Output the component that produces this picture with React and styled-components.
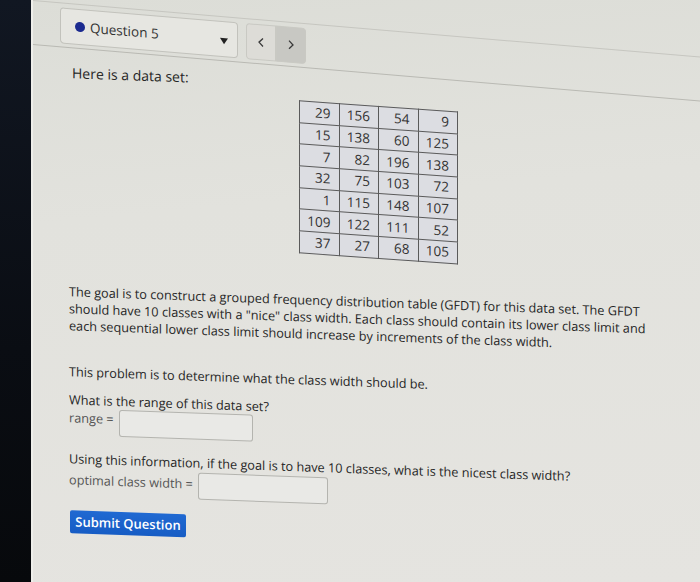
import styled, { createGlobalStyle } from 'styled-components';

const GlobalStyle = createGlobalStyle`
  html, body {
    margin: 0;
    padding: 0;
  }
  body {
    width: 700px;
    height: 582px;
    overflow: hidden;
    background: #0b0f16;
    font-family: 'Open Sans', 'Noto Sans', sans-serif;
  }
`;

const Frame = styled.div`
  display: flex;
  width: 700px;
  height: 582px;
  overflow: hidden;
`;

const Bezel = styled.div`
  width: 31px;
  flex-shrink: 0;
  background: linear-gradient(180deg, #111722 0%, #0a0d13 60%, #07090c 100%);
`;

const Screen = styled.div`
  flex: 1;
  overflow: hidden;
  border-left: 2px solid #eeeeea;
  background: linear-gradient(175deg, #dcddd7 0%, #e2e2dd 35%, #e5e4e0 100%);
  color: #262626;
`;

const Content = styled.div`
  transform: skewY(2deg);
  transform-origin: 0 0;
  width: 760px;
`;

const Header = styled.div`
  display: flex;
  align-items: flex-start;
  height: 39px;
  padding: 4px 0 0 27px;
  border-top: 1px solid #c6c6c0;
  border-bottom: 1px solid #b9b9b3;
  transform: skewY(2.85deg);
  transform-origin: 0 0;
`;

const Selector = styled.div`
  display: flex;
  align-items: center;
  box-sizing: border-box;
  width: 178px;
  height: 36px;
  padding: 0 9px 0 14px;
  border: 1px solid #c2c2bc;
  border-radius: 4px;
  background: #e6e6e1;
  font-size: 13.5px;
  color: #333;
`;

const Dot = styled.span`
  width: 10px;
  height: 10px;
  border-radius: 50%;
  background: #1b2a8f;
  margin-right: 5px;
`;

const Caret = styled.span`
  margin-left: auto;
  width: 0;
  height: 0;
  border-left: 4px solid transparent;
  border-right: 4px solid transparent;
  border-top: 6px solid #222;
  margin-top: 4px;
`;

const Nav = styled.div`
  display: flex;
  margin-left: 8px;
`;

const NavButton = styled.div`
  display: flex;
  align-items: center;
  justify-content: center;
  box-sizing: border-box;
  width: 30px;
  height: 36px;
  border: 1px solid #c9c9c3;
  background: ${(p) => (p.$active ? '#c8c8c3' : '#dddcd7')};
  border-radius: ${(p) => (p.$side === 'left' ? '4px 0 0 4px' : '0 4px 4px 0')};
  color: #3a3a3a;
`;

const Body = styled.div`
  padding-left: 36px;
  font-size: 12.7px;
  line-height: 17px;
`;

const Line = styled.p`
  margin: ${(p) => p.$top || 0}px 0 0;
  padding-left: ${(p) => p.$indent || 0}px;
  font-size: ${(p) => p.$size || 12.7}px;
  white-space: nowrap;
`;

const DataTable = styled.table`
  margin: 11px 0 0 230px;
  border-collapse: collapse;
  transform: skewY(2deg);
  transform-origin: 0 0;
  background: #dcdde2;
  font-size: 13.5px;
  color: #333;

  td {
    box-sizing: border-box;
    width: 39.5px;
    height: 21.7px;
    padding: 0 8px 0 0;
    border: 1px solid #5a5a5a;
    text-align: right;
    line-height: 18px;
  }
`;

const Paragraph = styled.p`
  margin: ${(p) => p.$top}px 0 0;
  white-space: nowrap;
`;

const AnswerRow = styled.div`
  display: flex;
  align-items: flex-start;
  margin-top: ${(p) => p.$top || 0}px;
`;

const Label = styled.span`
  color: #555;
  margin-top: ${(p) => p.$shift || 0}px;
  margin-right: 5px;
`;

const AnswerBox = styled.div`
  box-sizing: border-box;
  width: ${(p) => p.$width}px;
  height: 27px;
  border: 1px solid #b4b4af;
  border-radius: 3px;
  background: #e9e9e6;
`;

const SubmitButton = styled.button`
  display: block;
  margin-top: 15px;
  margin-left: 1px;
  width: 116px;
  height: 23px;
  padding: 0;
  border: none;
  border-radius: 2px;
  background: linear-gradient(180deg, #2069d2 0%, #165cc4 100%);
  color: #fff;
  font-family: 'Open Sans', sans-serif;
  font-size: 13px;
  font-weight: 600;
`;

const rows = [
  [29, 156, 54, 9],
  [15, 138, 60, 125],
  [7, 82, 196, 138],
  [32, 75, 103, 72],
  [1, 115, 148, 107],
  [109, 122, 111, 52],
  [37, 27, 68, 105],
];

function Chevron({ dir }) {
  return (
    <svg width="8" height="10" viewBox="0 0 8 10" fill="none">
      <path
        d={dir === 'left' ? 'M6 1 L2 5 L6 9' : 'M2 1 L6 5 L2 9'}
        stroke="#3a3a3a"
        strokeWidth="1.3"
      />
    </svg>
  );
}

export default function App() {
  return (
    <Frame>
      <GlobalStyle />
      <Bezel />
      <Screen>
        <Content>
          <Header>
            <Selector>
              <Dot />
              Question 5
              <Caret />
            </Selector>
            <Nav>
              <NavButton $side="left">
                <Chevron dir="left" />
              </NavButton>
              <NavButton $side="right" $active>
                <Chevron dir="right" />
              </NavButton>
            </Nav>
          </Header>
          <Body>
            <Line $top={18} $indent={3} $size={14}>
              Here is a data set:
            </Line>
            <DataTable>
              <tbody>
                {rows.map((r, i) => (
                  <tr key={i}>
                    {r.map((v, j) => (
                      <td key={j}>{v}</td>
                    ))}
                  </tr>
                ))}
              </tbody>
            </DataTable>
            <Paragraph $top={38}>
              The goal is to construct a grouped frequency distribution table (GFDT) for this data
              set. The GFDT
              <br />
              should have 10 classes with a "nice" class width. Each class should contain its lower
              class limit and
              <br />
              each sequential lower class limit should increase by increments of the class width.
            </Paragraph>
            <Line $top={29}>This problem is to determine what the class width should be.</Line>
            <Line $top={11}>What is the range of this data set?</Line>
            <AnswerRow>
              <Label $shift={1}>range =</Label>
              <AnswerBox $width={134} />
            </AnswerRow>
            <Line $top={15}>
              Using this information, if the goal is to have 10 classes, what is the nicest class
              width?
            </Line>
            <AnswerRow $top={1}>
              <Label $shift={3}>optimal class width =</Label>
              <AnswerBox $width={130} />
            </AnswerRow>
            <SubmitButton>Submit Question</SubmitButton>
          </Body>
        </Content>
      </Screen>
    </Frame>
  );
}
